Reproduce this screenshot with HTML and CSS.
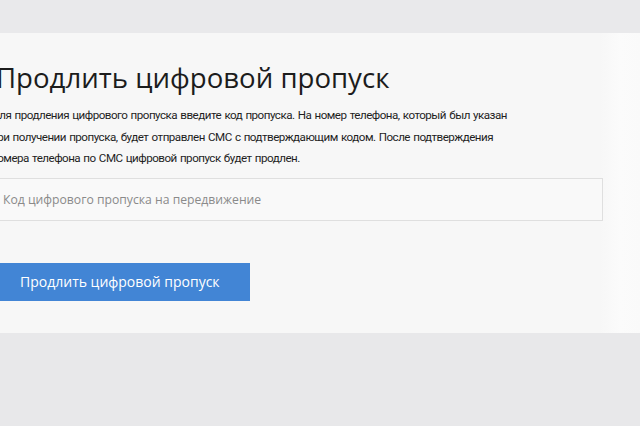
FILE: index.html
```html
<!DOCTYPE html>
<html lang="ru">
<head>
<meta charset="utf-8">
<link rel="stylesheet" href="styles.css">
</head>
<body>
<div class="page">
  <div class="topbar"></div>
  <main class="card">
    <div class="content">
      <h1 class="title">Продлить цифровой пропуск</h1>
      <p class="desc">Для продления цифрового пропуска введите код пропуска. На номер телефона, который был указан<br>при получении пропуска, будет отправлен СМС с подтверждающим кодом. После подтверждения<br>номера телефона по СМС цифровой пропуск будет продлен.</p>
      <input class="code" type="text" placeholder="Код цифрового пропуска на передвижение">
      <button class="btn" type="button">Продлить цифровой пропуск</button>
    </div>
  </main>
  <div class="footer"></div>
</div>
</body>
</html>
```

FILE: styles.css
```css
html, body {
  margin: 0;
  padding: 0;
  width: 640px;
  height: 426px;
  overflow: hidden;
  background: #e8e8ea;
}
.page {
  display: flex;
  flex-direction: column;
  height: 426px;
}
.topbar {
  height: 33px;
  background: #e9e9eb;
  flex: none;
}
.card {
  height: 300px;
  flex: none;
  background: linear-gradient(to right, #f7f7f7 0, #f7f7f7 600px, #fbfbfb 620px, #fafafa 640px);
  overflow: hidden;
}
.content {
  margin-left: -9px;
  width: 612px;
  display: flex;
  flex-direction: column;
  align-items: flex-start;
  padding-top: 26px;
}
.title {
  margin: 0 0 0 5px;
  font-family: "Open Sans", "Noto Sans", sans-serif;
  font-weight: 500;
  font-size: 27.6px;
  line-height: 36px;
  color: #1c1c1c;
}
.desc {
  margin: 10px 0 0 0;
  font-family: "Roboto", "Noto Sans", sans-serif;
  font-size: 11.6px;
  letter-spacing: -0.5px;
  word-spacing: 0.8px;
  line-height: 21.5px;
  color: #1e1e1e;
  white-space: nowrap;
}
.code {
  margin-top: 8px;
  box-sizing: border-box;
  width: 612px;
  height: 43px;
  border: 1px solid #dfdfdf;
  background: #f9f9f9;
  padding: 0 11px;
  font-family: "Open Sans", "Noto Sans", sans-serif;
  font-size: 12.2px;
  color: #333;
  outline: none;
}
.code::placeholder {
  color: #8a8a8a;
}
.btn {
  margin-top: 42px;
  box-sizing: border-box;
  width: 259px;
  height: 38px;
  border: none;
  background: #4285d5;
  color: #fff;
  font-family: "Open Sans", "Noto Sans", sans-serif;
  font-size: 14px;
  text-align: left;
  padding: 0 0 0 29px;
  cursor: pointer;
}
.footer {
  flex: 1;
  background: #e8e8ea;
}
```
